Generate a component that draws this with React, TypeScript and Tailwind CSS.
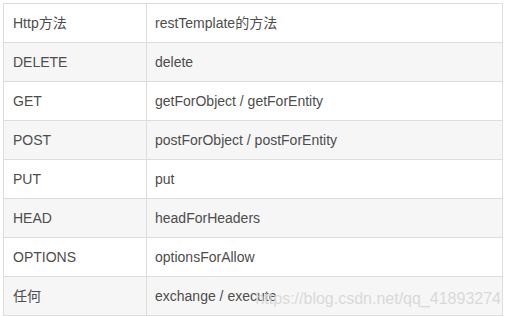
const rows: [string, string][] = [
  ['Http方法', 'restTemplate的方法'],
  ['DELETE', 'delete'],
  ['GET', 'getForObject / getForEntity'],
  ['POST', 'postForObject / postForEntity'],
  ['PUT', 'put'],
  ['HEAD', 'headForHeaders'],
  ['OPTIONS', 'optionsForAllow'],
  ['任何', 'exchange / execute'],
]

export default function App() {
  return (
    <div
      className="relative w-[512px] h-[316px] bg-white overflow-hidden"
      style={{ fontFamily: '"Liberation Sans", Arial, "Noto Sans CJK SC", sans-serif' }}
    >
      <table className="ml-[3px] mt-[3px] w-[500px] border-collapse text-[14px] text-[#4d4d4d]">
        <tbody>
          {rows.map(([method, fn], i) => (
            <tr key={method} className={i % 2 === 1 ? 'bg-[#f6f6f6]' : 'bg-white'}>
              <td className="w-[143px] h-[39px] border border-[#dddddd] pl-[9px] align-middle">{method}</td>
              <td className="h-[39px] border border-[#dddddd] pl-[8px] align-middle">{fn}</td>
            </tr>
          ))}
        </tbody>
      </table>
      <div className="absolute right-[11px] bottom-[9px] text-[16px] leading-none text-[#d6d6d6] opacity-90 whitespace-nowrap pointer-events-none">
        https://blog.csdn.net/qq_41893274
      </div>
    </div>
  )
}
